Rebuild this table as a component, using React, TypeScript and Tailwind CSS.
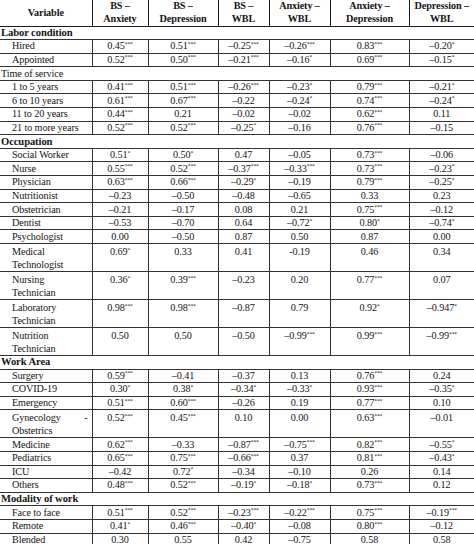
type Row =
  | { kind: "section"; label: string; bold: boolean }
  | { kind: "data"; label: string[]; values: string[]; split?: boolean };

const headers = [
  ["BS –", "Anxiety"],
  ["BS –", "Depression"],
  ["BS –", "WBL"],
  ["Anxiety –", "WBL"],
  ["Anxiety –", "Depression"],
  ["Depression –", "WBL"],
];

const widths = ["w-[92px]", "w-[56px]", "w-[70px]", "w-[51px]", "w-[61px]", "w-[79px]", "w-[65px]"];

const rows: Row[] = [
  { kind: "section", label: "Labor condition", bold: true },
  { kind: "data", label: ["Hired"], values: ["0.45***", "0.51***", "–0.25***", "–0.26***", "0.83***", "–0.20*"] },
  { kind: "data", label: ["Appointed"], values: ["0.52***", "0.50***", "–0.21***", "–0.16*", "0.69***", "–0.15*"] },
  { kind: "section", label: "Time of service", bold: false },
  { kind: "data", label: ["1 to 5 years"], values: ["0.41***", "0.51***", "–0.26***", "–0.23*", "0.79***", "–0.21*"] },
  { kind: "data", label: ["6 to 10 years"], values: ["0.61***", "0.67***", "–0.22", "–0.24*", "0.74***", "–0.24*"] },
  { kind: "data", label: ["11 to 20 years"], values: ["0.44***", "0.21", "–0.02", "–0.02", "0.62***", "0.11"] },
  { kind: "data", label: ["21 to more years"], values: ["0.52***", "0.52***", "–0.25*", "–0.16", "0.76***", "–0.15"] },
  { kind: "section", label: "Occupation", bold: true },
  { kind: "data", label: ["Social Worker"], values: ["0.51*", "0.50*", "0.47", "–0.05", "0.73***", "–0.06"] },
  { kind: "data", label: ["Nurse"], values: ["0.55***", "0.52***", "–0.37***", "–0.33***", "0.73***", "–0.23*"] },
  { kind: "data", label: ["Physician"], values: ["0.63***", "0.66***", "–0.29*", "–0.19", "0.79***", "–0.25*"] },
  { kind: "data", label: ["Nutritionist"], values: ["–0.23", "–0.50", "–0.48", "–0.65", "0.33", "0.23"] },
  { kind: "data", label: ["Obstetrician"], values: ["–0.21", "–0.17", "0.08", "0.21", "0.75***", "–0.12"] },
  { kind: "data", label: ["Dentist"], values: ["–0.53", "–0.70", "0.64", "–0.72*", "0.80*", "–0.74*"] },
  { kind: "data", label: ["Psychologist"], values: ["0.00", "–0.50", "0.87", "0.50", "0.87", "0.00"] },
  { kind: "data", label: ["Medical", "Technologist"], values: ["0.69*", "0.33", "0.41", "-0.19", "0.46", "0.34"] },
  { kind: "data", label: ["Nursing", "Technician"], values: ["0.36*", "0.39***", "–0.23", "0.20", "0.77***", "0.07"] },
  { kind: "data", label: ["Laboratory", "Technician"], values: ["0.98***", "0.98***", "–0.87", "0.79", "0.92*", "–0.947*"] },
  { kind: "data", label: ["Nutrition", "Technician"], values: ["0.50", "0.50", "–0.50", "–0.99***", "0.99***", "–0.99***"] },
  { kind: "section", label: "Work Area", bold: true },
  { kind: "data", label: ["Surgery"], values: ["0.59***", "–0.41", "–0.37", "0.13", "0.76***", "0.24"] },
  { kind: "data", label: ["COVID-19"], values: ["0.30*", "0.38*", "–0.34*", "–0.33*", "0.93***", "–0.35*"] },
  { kind: "data", label: ["Emergency"], values: ["0.51***", "0.60***", "–0.26", "0.19", "0.77***", "0.10"] },
  { kind: "data", label: ["Gynecology", "Obstetrics"], split: true, values: ["0.52***", "0.45***", "0.10", "0.00", "0.63***", "–0.01"] },
  { kind: "data", label: ["Medicine"], values: ["0.62***", "–0.33", "–0.87***", "–0.75***", "0.82***", "–0.55*"] },
  { kind: "data", label: ["Pediatrics"], values: ["0.65***", "0.75***", "–0.66***", "0.37", "0.81***", "–0.43*"] },
  { kind: "data", label: ["ICU"], values: ["–0.42", "0.72*", "–0.34", "–0.10", "0.26", "0.14"] },
  { kind: "data", label: ["Others"], values: ["0.48***", "0.52***", "–0.19*", "–0.18*", "0.73***", "0.12"] },
  { kind: "section", label: "Modality of work", bold: true },
  { kind: "data", label: ["Face to face"], values: ["0.51***", "0.52***", "–0.23***", "–0.22***", "0.75***", "–0.19***"] },
  { kind: "data", label: ["Remote"], values: ["0.41*", "0.46***", "–0.40*", "–0.08", "0.80***", "–0.12"] },
  { kind: "data", label: ["Blended"], values: ["0.30", "0.55", "0.42", "–0.75", "0.58", "0.58"] },
];

function Value({ v }: { v: string }) {
  const m = v.match(/^([^*]+)(\**)$/);
  const num = m ? m[1] : v;
  const stars = m ? m[2] : "";
  return (
    <span>
      {num}
      {stars && <sup className="text-[5.5px] -top-[3.5px]">{stars}</sup>}
    </span>
  );
}

export default function App() {
  return (
    <div
      className="w-[474px] h-[544px] bg-white text-[#141414] overflow-hidden"
      style={{ fontFamily: '"Liberation Serif", "Times New Roman", serif' }}
    >
      <table className="table-fixed border-collapse w-[474px] text-[10.2px] tracking-[-0.1px]">
        <colgroup>
          {widths.map((w, i) => (
            <col key={i} className={w} />
          ))}
        </colgroup>
        <thead>
          <tr className="h-[26px]">
            <th className="border-b border-r border-[#1a1a1a] font-bold leading-[12.5px] align-middle p-0">Variable</th>
            {headers.map((h, i) => (
              <th
                key={i}
                className={`border-b border-[#1a1a1a] font-bold leading-[12.5px] align-middle p-0 whitespace-nowrap ${i < 5 ? "border-r" : ""}`}
              >
                {h[0]}
                <br />
                {h[1]}
              </th>
            ))}
          </tr>
        </thead>
        <tbody>
          {rows.map((r, i) => {
            if (r.kind === "section") {
              return (
                <tr key={i} className="h-[13.6px]">
                  <td
                    colSpan={7}
                    className={`border-y border-[#333] p-0 pl-[1px] leading-[12px] align-middle ${r.bold ? "font-bold text-[10.6px]" : ""}`}
                  >
                    {r.label}
                  </td>
                </tr>
              );
            }
            const double = r.label.length > 1;
            const lead = double ? "leading-[13px] pt-[1px]" : "leading-[12px]";
            return (
              <tr key={i} className={double ? "h-[27.3px]" : "h-[13.6px]"}>
                <td className={`border-y border-r border-[#333] p-0 pl-[12px] pr-[4px] whitespace-nowrap ${lead}`}>
                  {r.split ? (
                    <>
                      <div className="flex justify-between">
                        <span>{r.label[0]}</span>
                        <span>-</span>
                      </div>
                      <div>{r.label[1]}</div>
                    </>
                  ) : (
                    r.label.map((l, j) => <div key={j}>{l}</div>)
                  )}
                </td>
                {r.values.map((v, j) => (
                  <td
                    key={j}
                    className={`border-y border-[#333] p-0 text-center whitespace-nowrap ${lead} ${j < 5 ? "border-r" : ""}`}
                  >
                    {double ? (
                      <>
                        <div>
                          <Value v={v} />
                        </div>
                        <div>&nbsp;</div>
                      </>
                    ) : (
                      <Value v={v} />
                    )}
                  </td>
                ))}
              </tr>
            );
          })}
        </tbody>
      </table>
    </div>
  );
}
